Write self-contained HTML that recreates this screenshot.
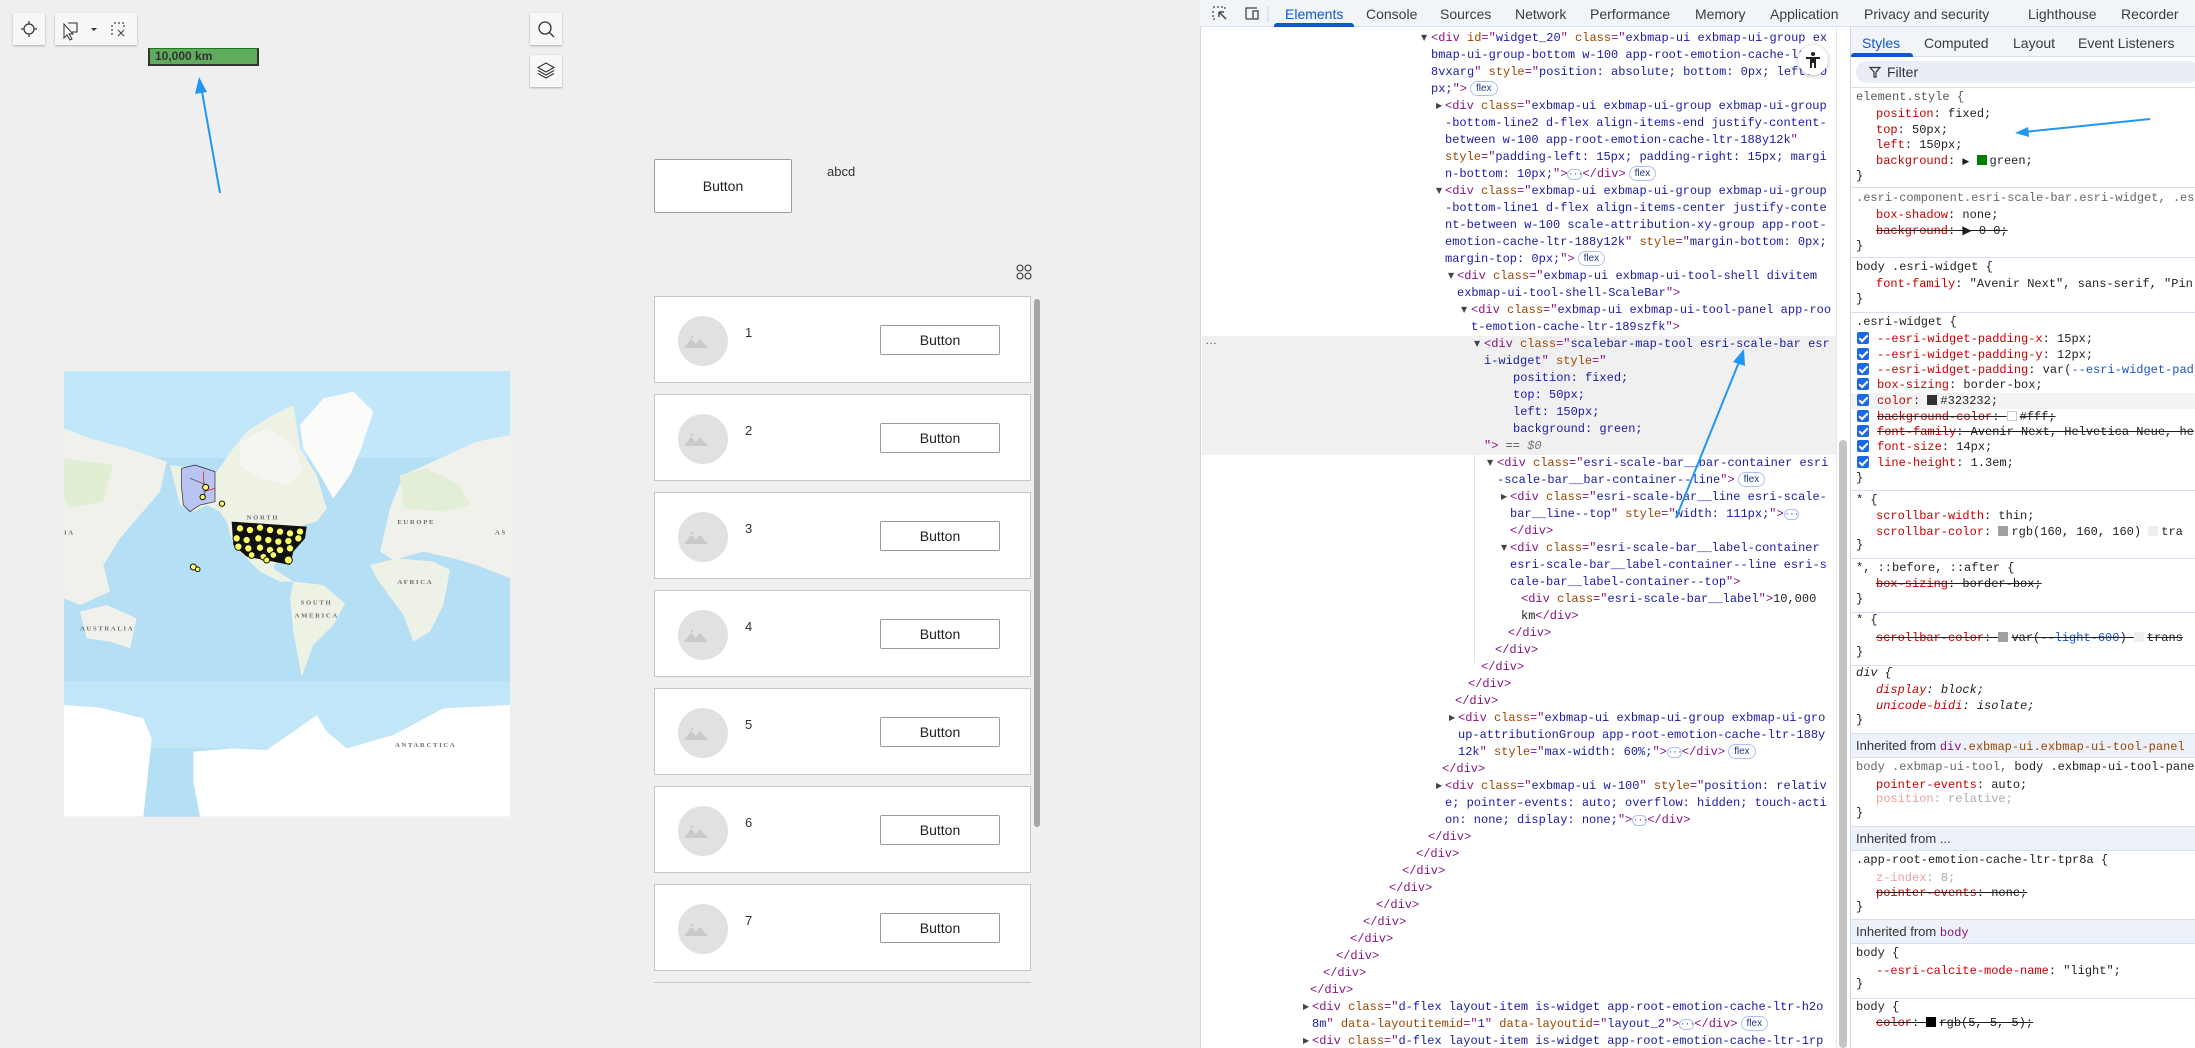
<!DOCTYPE html>
<html><head><meta charset="utf-8">
<style>
*{box-sizing:border-box;margin:0;padding:0}
html,body{width:2195px;height:1048px;overflow:hidden;background:#efefef;font-family:"Liberation Sans",sans-serif;position:relative}
.abs{position:absolute}
.tb{position:absolute;background:#f7f7f7;box-shadow:0 1px 2px rgba(0,0,0,.28);}
.card{position:absolute;left:654px;width:377px;height:87px;background:#fff;border:1px solid #c6c6c6}
.av{position:absolute;left:23px;top:19px;width:50px;height:50px;border-radius:50%;background:#e1e1e1}
.num{position:absolute;left:90px;top:28px;font-size:13px;color:#333}
.btn{position:absolute;left:225px;top:28px;width:120px;height:30px;border:1px solid #9a9a9a;border-radius:2px;background:#fff;font-size:14px;color:#222;text-align:center;line-height:28px}
.dt{position:absolute;font-family:"Liberation Mono",monospace;font-size:12px;white-space:pre;height:17px;line-height:17px;color:#1f1f1f}
.t{color:#881280}.a{color:#994500}.v{color:#1a1aa6}
.tri{position:absolute;font-size:8px;color:#444;font-family:"DejaVu Sans",sans-serif}
.bd{display:inline-block;border:1px solid #a8c0ef;border-radius:9px;font-size:10px;line-height:13px;padding:0 5px;color:#1f3a80;font-family:"Liberation Sans",sans-serif;vertical-align:1px;margin-left:3px}
.el{display:inline-block;border:1px solid #a8c0ef;border-radius:7px;font-size:8px;line-height:9px;width:15px;text-align:center;color:#1a1aa6;vertical-align:1px}
.tab{position:absolute;top:6px;font-size:14px;color:#3c3c3c;white-space:nowrap}
.st{position:absolute;font-family:"Liberation Mono",monospace;font-size:12px;white-space:pre;line-height:16px;height:16px;color:#1f1f1f}
.p{color:#c80000}.s{text-decoration:line-through}
.div{position:absolute;left:1851px;width:344px;height:1px;background:#d6e0f0}
.band{position:absolute;left:1851px;width:344px;height:25px;background:#edf2fa;border-top:1px solid #d6e0f0;border-bottom:1px solid #d6e0f0;font-size:13px;line-height:23px;padding-left:5px;color:#333;white-space:nowrap}
.cb{display:inline-block;width:12px;height:12px;background:#1a6ae8;border-radius:2px;vertical-align:-2px;margin-right:8px;position:relative}
.cb:after{content:"";position:absolute;left:4px;top:1px;width:3px;height:7px;border:solid #fff;border-width:0 2px 2px 0;transform:rotate(45deg)}
.sw{display:inline-block;width:10px;height:10px;vertical-align:-1px;margin-right:3px}
</style></head><body>

<!-- map toolbar -->
<div class="tb" style="left:13px;top:13px;width:32px;height:32px">
<svg width="32" height="32" viewBox="0 0 32 32"><circle cx="16" cy="16" r="5" fill="none" stroke="#333" stroke-width="1.2"/><path d="M16 8v3M16 21v3M8 16h3M21 16h3" stroke="#333" stroke-width="1.2"/></svg></div>
<div class="tb" style="left:55px;top:13px;width:82px;height:32px">
<svg width="82" height="32" viewBox="0 0 82 32"><path d="M13 10h9v9h-5" fill="none" stroke="#333" stroke-width="1.1"/><path d="M9 11l0 14 3-3 3 5 2-1-3-5 4 0z" fill="#fff" stroke="#333" stroke-width="1"/><path d="M36 15h6l-3 3z" fill="#333"/><path d="M59 10h2M63 10h2M67 10h2M57 12v2M57 16v2M57 20v2M69 12v2" stroke="#444" stroke-width="1.2"/><path d="M63 17l6 6M69 17l-6 6" stroke="#444" stroke-width="1.1"/></svg></div>
<div class="tb" style="left:530px;top:13px;width:32px;height:32px">
<svg width="32" height="32" viewBox="0 0 32 32"><circle cx="15" cy="15" r="6" fill="none" stroke="#333" stroke-width="1.3"/><path d="M19.5 19.5l4.5 4.5" stroke="#333" stroke-width="1.3"/></svg></div>
<div class="tb" style="left:530px;top:55px;width:32px;height:32px">
<svg width="32" height="32" viewBox="0 0 32 32"><path d="M16 8l8 4.5-8 4.5-8-4.5z" fill="none" stroke="#333" stroke-width="1.1"/><path d="M8 15.5l8 4.5 8-4.5M8 18.5l8 4.5 8-4.5" fill="none" stroke="#333" stroke-width="1.1"/></svg></div>

<!-- scale bar -->
<div class="abs" style="left:148px;top:48px;width:111px;height:18px;background:#5fac5f;border:2px solid #333;border-top:1px solid #1a7a1a;font-size:12px;font-weight:bold;color:#323232;line-height:15px;padding-left:5px">10,000 km</div>

<!-- map -->
<svg class="abs" style="left:60px;top:365px" width="455" height="458" viewBox="0 0 1365 1374">
<rect x="12" y="18" width="1338" height="1337" fill="#b4dff5"/>
<rect x="12" y="18" width="1338" height="260" fill="#c2e7f9"/>
<rect x="12" y="950" width="1338" height="200" fill="#c0e6f8"/>
<path d="M12 1020 L120 1028 L250 1060 L275 1120 L250 1355 L12 1355Z" fill="#fff"/>
<path d="M400 1160 L520 1150 L620 1155 L700 1100 L770 1050 L800 1100 L860 1150 L1000 1110 L1150 1030 L1350 1020 L1350 1355 L420 1355 L400 1250Z" fill="#fff"/>
<path d="M720 180 L790 100 L880 80 L940 140 L900 260 L870 330 L820 400 L780 330 L730 250Z" fill="#fbfbfa"/>
<path d="M330 300 L365 305 L470 320 L520 250 L560 200 L640 150 L700 120 L720 250 L770 330 L800 430 L770 470 L730 480 L690 520 L650 580 L640 610 L700 650 L660 650 L600 620 L560 580 L520 540 L500 470 L480 440 L440 420 L400 440 L360 420Z" fill="#eef2e4"/>
<path d="M540 230 L620 190 L700 240 L730 320 L680 360 L600 340 L540 300Z" fill="#f5f6f2"/>
<path d="M12 190 L90 220 L200 250 L320 290 L300 380 L240 450 L180 520 L130 600 L150 680 L60 720 L12 700Z" fill="#f1f1ec"/>
<path d="M12 280 L160 300 L130 410 L30 430 L12 400Z" fill="#e2eed4"/>
<path d="M700 650 L790 660 L855 715 L820 780 L760 840 L725 935 L700 800 L690 700Z" fill="#eef2e4"/>
<path d="M930 600 L1010 580 L1120 590 L1170 615 L1150 720 L1110 800 L1060 830 L1030 750 L950 640Z" fill="#eef1e6"/>
<path d="M960 560 L990 430 L1030 330 L1140 280 L1250 230 L1350 210 L1350 640 L1250 600 L1180 580 L1090 560 L1000 585Z" fill="#f1f1ec"/>
<path d="M1020 330 L1100 310 L1200 360 L1230 420 L1150 440 L1030 430Z" fill="#e2eed6"/>
<path d="M60 740 L140 720 L230 760 L210 850 L150 830 L80 820Z" fill="#f1f1ec"/>
<path d="M365 310 L405 300 L465 320 L465 410 L420 420 L390 440 L370 420 L365 370Z" fill="#b9c4f2" stroke="#222" stroke-width="2"/>
<path d="M390 340 L440 360 L430 400" stroke="#666" stroke-width="3" fill="none"/>
<path d="M430 320 L432 360 M430 380 L465 370" stroke="#e00" stroke-width="2"/>
<path d="M515 470 L740 485 L735 520 L700 560 L690 600 L640 590 L560 575 L520 540Z" fill="#111"/>
<g fill="#ffff66" stroke="#111" stroke-width="3">
<circle cx="540" cy="490" r="11"/><circle cx="570" cy="495" r="11"/><circle cx="600" cy="488" r="11"/><circle cx="630" cy="495" r="11"/><circle cx="660" cy="500" r="11"/><circle cx="690" cy="505" r="11"/><circle cx="720" cy="500" r="11"/>
<circle cx="530" cy="520" r="11"/><circle cx="560" cy="525" r="11"/><circle cx="595" cy="520" r="11"/><circle cx="625" cy="525" r="11"/><circle cx="655" cy="530" r="11"/><circle cx="685" cy="528" r="11"/><circle cx="715" cy="520" r="11"/>
<circle cx="535" cy="545" r="11"/><circle cx="565" cy="550" r="11"/><circle cx="600" cy="548" r="11"/><circle cx="630" cy="555" r="11"/><circle cx="660" cy="555" r="11"/><circle cx="690" cy="550" r="11"/>
<circle cx="575" cy="570" r="10"/><circle cx="610" cy="575" r="10"/><circle cx="640" cy="570" r="10"/><circle cx="685" cy="585" r="12"/><circle cx="620" cy="585" r="9"/>
<circle cx="437" cy="367" r="9"/><circle cx="428" cy="396" r="8"/><circle cx="486" cy="416" r="8"/><circle cx="400" cy="606" r="9"/><circle cx="413" cy="613" r="7"/></g>
<g font-family="Liberation Serif,serif" font-size="20" font-weight="bold" fill="#6d6d6d" letter-spacing="5">
<text x="560" y="463">NORTH</text><text x="1012" y="477">EUROPE</text><text x="1012" y="657">AFRICA</text><text x="722" y="719">SOUTH</text><text x="704" y="758">AMERICA</text><text x="60" y="797">AUSTRALIA</text><text x="1005" y="1146">ANTARCTICA</text><text x="12" y="508">IA</text><text x="1305" y="508">AS</text></g>
</svg>

<!-- top button -->
<div class="abs" style="left:654px;top:159px;width:138px;height:54px;background:#fff;border:1px solid #9e9e9e;border-radius:2px;font-size:14px;color:#222;text-align:center;line-height:52px">Button</div>
<div class="abs" style="left:827px;top:164px;font-size:13px;color:#333">abcd</div>
<svg class="abs" style="left:1015px;top:263px" width="18" height="18" viewBox="0 0 18 18"><g fill="none" stroke="#333" stroke-width="1.1"><circle cx="5" cy="5" r="3"/><circle cx="13" cy="5" r="3"/><circle cx="5" cy="13" r="3"/><circle cx="13" cy="13" r="3"/></g></svg>

<!-- cards -->
<div class="card" style="top:296px"><div class="av"></div><div class="num">1</div><div class="btn">Button</div></div>
<div class="card" style="top:394px"><div class="av"></div><div class="num">2</div><div class="btn">Button</div></div>
<div class="card" style="top:492px"><div class="av"></div><div class="num">3</div><div class="btn">Button</div></div>
<div class="card" style="top:590px"><div class="av"></div><div class="num">4</div><div class="btn">Button</div></div>
<div class="card" style="top:688px"><div class="av"></div><div class="num">5</div><div class="btn">Button</div></div>
<div class="card" style="top:786px"><div class="av"></div><div class="num">6</div><div class="btn">Button</div></div>
<div class="card" style="top:884px"><div class="av"></div><div class="num">7</div><div class="btn">Button</div></div>
<div class="abs" style="left:654px;top:982px;width:377px;height:1px;background:#c6c6c6"></div>
<svg class="abs" style="left:654px;top:296px" width="100" height="700">
<g fill="#c9c9c9">
<path d="M30 52l7-9 5 5 4-5 8 9z"/><circle cx="38" cy="41" r="1.2"/>
<path d="M30 150l7-9 5 5 4-5 8 9z"/><circle cx="38" cy="139" r="1.2"/>
<path d="M30 248l7-9 5 5 4-5 8 9z"/><circle cx="38" cy="237" r="1.2"/>
<path d="M30 346l7-9 5 5 4-5 8 9z"/><circle cx="38" cy="335" r="1.2"/>
<path d="M30 444l7-9 5 5 4-5 8 9z"/><circle cx="38" cy="433" r="1.2"/>
<path d="M30 542l7-9 5 5 4-5 8 9z"/><circle cx="38" cy="531" r="1.2"/>
<path d="M30 640l7-9 5 5 4-5 8 9z"/><circle cx="38" cy="629" r="1.2"/></g></svg>
<div class="abs" style="left:1034px;top:299px;width:6px;height:528px;background:#a4a4a4;border-radius:3px"></div>

<!-- arrow left -->
<svg class="abs" style="left:0;top:0" width="1200" height="300"><path d="M220 193 L201 86" stroke="#2196f3" stroke-width="2"/><path d="M199 77 L195 94 L207 92Z" fill="#2196f3"/></svg>

<!-- DEVTOOLS -->
<div class="abs" style="left:1200px;top:0;width:995px;height:1048px;background:#fff;border-left:1px solid #d0d7e2"></div>
<div class="abs" style="left:1200px;top:0;width:995px;height:27px;background:#f1f4f9;border-bottom:1px solid #d6e0f0"></div>
<svg class="abs" style="left:1212px;top:4px" width="60" height="20" viewBox="0 0 60 20"><path d="M1 3h2M5 3h2M9 3h2M1 7v2M1 11v2M1 15h2M13 3v2" stroke="#444" stroke-width="1.3"/><path d="M7 8l7 7M7 8h5M7 8v5" stroke="#444" stroke-width="1.5" fill="none"/><path d="M34 15V4h11M40 15h-6" stroke="#444" stroke-width="1.3" fill="none"/><rect x="41" y="7" width="5" height="8" fill="none" stroke="#444" stroke-width="1.3"/><path d="M56 2v16" stroke="#ccd3df"/></svg>
<div class="tab" style="left:1285px;color:#0b57d0">Elements</div>
<div class="abs" style="left:1274px;top:23px;width:80px;height:4px;background:#0b57d0;border-radius:3px 3px 0 0"></div>
<div class="tab" style="left:1366px">Console</div>
<div class="tab" style="left:1440px">Sources</div>
<div class="tab" style="left:1515px">Network</div>
<div class="tab" style="left:1590px">Performance</div>
<div class="tab" style="left:1695px">Memory</div>
<div class="tab" style="left:1770px">Application</div>
<div class="tab" style="left:1864px">Privacy and security</div>
<div class="tab" style="left:2028px">Lighthouse</div>
<div class="tab" style="left:2121px">Recorder</div>

<!-- elements selected band -->
<div class="abs" style="left:1202px;top:336px;width:634px;height:119px;background:#f0f0f0"></div>
<div class="abs" style="left:1205px;top:333px;font-size:12px;color:#555">…</div>
<div class="abs" style="left:1474px;top:455px;width:1px;height:208px;background:#e4e4e4"></div>
<div class="abs" style="left:1836px;top:27px;width:1px;height:1021px;background:#e8e8e8"></div>
<div class="abs" style="left:1839px;top:440px;width:8px;height:608px;background:#c4c4c4;border-radius:4px"></div>

<div class="tri" style="left:1421px;top:33px">▼</div><div class="dt" style="left:1431px;top:30px"><span class="t">&lt;div</span> <span class="a">id</span><span class="t">="</span><span class="v">widget_20</span><span class="t">"</span> <span class="a">class</span><span class="t">="</span><span class="v">exbmap-ui exbmap-ui-group ex</span></div>
<div class="dt" style="left:1431px;top:47px"><span class="v">bmap-ui-group-bottom w-100 app-root-emotion-cache-ltr-1</span></div>
<div class="dt" style="left:1431px;top:64px"><span class="v">8vxarg</span><span class="t">"</span> <span class="a">style</span><span class="t">="</span><span class="v">position: absolute; bottom: 0px; left: 0</span></div>
<div class="dt" style="left:1431px;top:81px"><span class="v">px;</span><span class="t">"&gt;</span><span class="bd">flex</span></div>
<div class="tri" style="left:1436px;top:101px">▶</div><div class="dt" style="left:1445px;top:98px"><span class="t">&lt;div</span> <span class="a">class</span><span class="t">="</span><span class="v">exbmap-ui exbmap-ui-group exbmap-ui-group</span></div>
<div class="dt" style="left:1445px;top:115px"><span class="v">-bottom-line2 d-flex align-items-end justify-content-</span></div>
<div class="dt" style="left:1445px;top:132px"><span class="v">between w-100 app-root-emotion-cache-ltr-188y12k</span><span class="t">"</span></div>
<div class="dt" style="left:1445px;top:149px"><span class="a">style</span><span class="t">="</span><span class="v">padding-left: 15px; padding-right: 15px; margi</span></div>
<div class="dt" style="left:1445px;top:166px"><span class="v">n-bottom: 10px;</span><span class="t">"&gt;</span><span class="el">···</span><span class="t">&lt;/div&gt;</span><span class="bd">flex</span></div>
<div class="tri" style="left:1436px;top:186px">▼</div><div class="dt" style="left:1445px;top:183px"><span class="t">&lt;div</span> <span class="a">class</span><span class="t">="</span><span class="v">exbmap-ui exbmap-ui-group exbmap-ui-group</span></div>
<div class="dt" style="left:1445px;top:200px"><span class="v">-bottom-line1 d-flex align-items-center justify-conte</span></div>
<div class="dt" style="left:1445px;top:217px"><span class="v">nt-between w-100 scale-attribution-xy-group app-root-</span></div>
<div class="dt" style="left:1445px;top:234px"><span class="v">emotion-cache-ltr-188y12k</span><span class="t">"</span> <span class="a">style</span><span class="t">="</span><span class="v">margin-bottom: 0px;</span></div>
<div class="dt" style="left:1445px;top:251px"><span class="v">margin-top: 0px;</span><span class="t">"&gt;</span><span class="bd">flex</span></div>
<div class="tri" style="left:1448px;top:271px">▼</div><div class="dt" style="left:1457px;top:268px"><span class="t">&lt;div</span> <span class="a">class</span><span class="t">="</span><span class="v">exbmap-ui exbmap-ui-tool-shell divitem</span></div>
<div class="dt" style="left:1457px;top:285px"><span class="v">exbmap-ui-tool-shell-ScaleBar</span><span class="t">"&gt;</span></div>
<div class="tri" style="left:1461px;top:305px">▼</div><div class="dt" style="left:1471px;top:302px"><span class="t">&lt;div</span> <span class="a">class</span><span class="t">="</span><span class="v">exbmap-ui exbmap-ui-tool-panel app-roo</span></div>
<div class="dt" style="left:1471px;top:319px"><span class="v">t-emotion-cache-ltr-189szfk</span><span class="t">"&gt;</span></div>
<div class="tri" style="left:1474px;top:339px">▼</div><div class="dt" style="left:1484px;top:336px"><span class="t">&lt;div</span> <span class="a">class</span><span class="t">="</span><span class="v">scalebar-map-tool esri-scale-bar esr</span></div>
<div class="dt" style="left:1484px;top:353px"><span class="v">i-widget</span><span class="t">"</span> <span class="a">style</span><span class="t">="</span></div>
<div class="dt" style="left:1513px;top:370px"><span class="v">position: fixed;</span></div>
<div class="dt" style="left:1513px;top:387px"><span class="v">top: 50px;</span></div>
<div class="dt" style="left:1513px;top:404px"><span class="v">left: 150px;</span></div>
<div class="dt" style="left:1513px;top:421px"><span class="v">background: green;</span></div>
<div class="dt" style="left:1484px;top:438px"><span class="t">"&gt;</span> <span style="color:#555">==</span> <i style="color:#777">$0</i></div>
<div class="tri" style="left:1487px;top:458px">▼</div><div class="dt" style="left:1497px;top:455px"><span class="t">&lt;div</span> <span class="a">class</span><span class="t">="</span><span class="v">esri-scale-bar__bar-container esri</span></div>
<div class="dt" style="left:1497px;top:472px"><span class="v">-scale-bar__bar-container--line</span><span class="t">"&gt;</span><span class="bd">flex</span></div>
<div class="tri" style="left:1501px;top:492px">▶</div><div class="dt" style="left:1510px;top:489px"><span class="t">&lt;div</span> <span class="a">class</span><span class="t">="</span><span class="v">esri-scale-bar__line esri-scale-</span></div>
<div class="dt" style="left:1510px;top:506px"><span class="v">bar__line--top</span><span class="t">"</span> <span class="a">style</span><span class="t">="</span><span class="v">width: 111px;</span><span class="t">"&gt;</span><span class="el">···</span></div>
<div class="dt" style="left:1510px;top:523px"><span class="t">&lt;/div&gt;</span></div>
<div class="tri" style="left:1501px;top:543px">▼</div><div class="dt" style="left:1510px;top:540px"><span class="t">&lt;div</span> <span class="a">class</span><span class="t">="</span><span class="v">esri-scale-bar__label-container</span></div>
<div class="dt" style="left:1510px;top:557px"><span class="v">esri-scale-bar__label-container--line esri-s</span></div>
<div class="dt" style="left:1510px;top:574px"><span class="v">cale-bar__label-container--top</span><span class="t">"&gt;</span></div>
<div class="dt" style="left:1521px;top:591px"><span class="t">&lt;div</span> <span class="a">class</span><span class="t">="</span><span class="v">esri-scale-bar__label</span><span class="t">"&gt;</span>10,000</div>
<div class="dt" style="left:1521px;top:608px">km<span class="t">&lt;/div&gt;</span></div>
<div class="dt" style="left:1508px;top:625px"><span class="t">&lt;/div&gt;</span></div>
<div class="dt" style="left:1495px;top:642px"><span class="t">&lt;/div&gt;</span></div>
<div class="dt" style="left:1481px;top:659px"><span class="t">&lt;/div&gt;</span></div>
<div class="dt" style="left:1468px;top:676px"><span class="t">&lt;/div&gt;</span></div>
<div class="dt" style="left:1455px;top:693px"><span class="t">&lt;/div&gt;</span></div>
<div class="tri" style="left:1449px;top:713px">▶</div><div class="dt" style="left:1458px;top:710px"><span class="t">&lt;div</span> <span class="a">class</span><span class="t">="</span><span class="v">exbmap-ui exbmap-ui-group exbmap-ui-gro</span></div>
<div class="dt" style="left:1458px;top:727px"><span class="v">up-attributionGroup app-root-emotion-cache-ltr-188y</span></div>
<div class="dt" style="left:1458px;top:744px"><span class="v">12k</span><span class="t">"</span> <span class="a">style</span><span class="t">="</span><span class="v">max-width: 60%;</span><span class="t">"&gt;</span><span class="el">···</span><span class="t">&lt;/div&gt;</span><span class="bd">flex</span></div>
<div class="dt" style="left:1442px;top:761px"><span class="t">&lt;/div&gt;</span></div>
<div class="tri" style="left:1436px;top:781px">▶</div><div class="dt" style="left:1445px;top:778px"><span class="t">&lt;div</span> <span class="a">class</span><span class="t">="</span><span class="v">exbmap-ui w-100</span><span class="t">"</span> <span class="a">style</span><span class="t">="</span><span class="v">position: relativ</span></div>
<div class="dt" style="left:1445px;top:795px"><span class="v">e; pointer-events: auto; overflow: hidden; touch-acti</span></div>
<div class="dt" style="left:1445px;top:812px"><span class="v">on: none; display: none;</span><span class="t">"&gt;</span><span class="el">···</span><span class="t">&lt;/div&gt;</span></div>
<div class="dt" style="left:1428px;top:829px"><span class="t">&lt;/div&gt;</span></div>
<div class="dt" style="left:1416px;top:846px"><span class="t">&lt;/div&gt;</span></div>
<div class="dt" style="left:1402px;top:863px"><span class="t">&lt;/div&gt;</span></div>
<div class="dt" style="left:1389px;top:880px"><span class="t">&lt;/div&gt;</span></div>
<div class="dt" style="left:1376px;top:897px"><span class="t">&lt;/div&gt;</span></div>
<div class="dt" style="left:1363px;top:914px"><span class="t">&lt;/div&gt;</span></div>
<div class="dt" style="left:1350px;top:931px"><span class="t">&lt;/div&gt;</span></div>
<div class="dt" style="left:1336px;top:948px"><span class="t">&lt;/div&gt;</span></div>
<div class="dt" style="left:1323px;top:965px"><span class="t">&lt;/div&gt;</span></div>
<div class="dt" style="left:1310px;top:982px"><span class="t">&lt;/div&gt;</span></div>
<div class="tri" style="left:1303px;top:1002px">▶</div><div class="dt" style="left:1312px;top:999px"><span class="t">&lt;div</span> <span class="a">class</span><span class="t">="</span><span class="v">d-flex layout-item is-widget app-root-emotion-cache-ltr-h2o</span></div>
<div class="dt" style="left:1312px;top:1016px"><span class="v">8m</span><span class="t">"</span> <span class="a">data-layoutitemid</span><span class="t">="</span><span class="v">1</span><span class="t">"</span> <span class="a">data-layoutid</span><span class="t">="</span><span class="v">layout_2</span><span class="t">"&gt;</span><span class="el">···</span><span class="t">&lt;/div&gt;</span><span class="bd">flex</span></div>
<div class="tri" style="left:1303px;top:1036px">▶</div><div class="dt" style="left:1312px;top:1033px"><span class="t">&lt;div</span> <span class="a">class</span><span class="t">="</span><span class="v">d-flex layout-item is-widget app-root-emotion-cache-ltr-1rp</span></div>

<!-- accessibility button -->
<div class="abs" style="left:1798px;top:45px;width:30px;height:30px;border-radius:50%;background:#fff;box-shadow:0 1px 4px rgba(0,0,0,.3)"></div>
<svg class="abs" style="left:1803px;top:50px" width="20" height="20" viewBox="0 0 20 20"><circle cx="10" cy="4" r="2" fill="#222"/><path d="M3 7h14v2h-4v9h-2v-5h-2v5H7V9H3z" fill="#222"/></svg>

<!-- arrow elements -->
<svg class="abs" style="left:1600px;top:330px" width="200" height="200"><path d="M76 188 L141 27" stroke="#2196f3" stroke-width="2"/><path d="M144 19 L133 32 L145 36Z" fill="#2196f3"/></svg>

<!-- STYLES PANE -->
<div class="abs" style="left:1850px;top:27px;width:1px;height:1021px;background:#cfd6e2"></div>
<div class="abs" style="left:1851px;top:27px;width:344px;height:30px;background:#f1f4f9;border-bottom:1px solid #d6e0f0"></div>
<div class="tab" style="left:1862px;top:35px;color:#0b57d0">Styles</div>
<div class="abs" style="left:1851px;top:53px;width:62px;height:4px;background:#0b57d0;border-radius:3px 3px 0 0"></div>
<div class="tab" style="left:1924px;top:35px">Computed</div>
<div class="tab" style="left:2013px;top:35px">Layout</div>
<div class="tab" style="left:2078px;top:35px">Event Listeners</div>
<div class="abs" style="left:1856px;top:61px;width:345px;height:22px;background:#e9eef6;border-radius:11px"></div>
<svg class="abs" style="left:1869px;top:66px" width="12" height="12" viewBox="0 0 12 12"><path d="M1 1.5h10L7 6v5H5V6z" fill="none" stroke="#333" stroke-width="1.2"/></svg>
<div class="abs" style="left:1887px;top:64px;font-size:14px;color:#333">Filter</div>
<div class="div" style="top:87px"></div>

<div class="st" style="left:1856px;top:89px;color:#555">element.style {</div>
<div class="st" style="left:1876px;top:106px"><span class="p">position</span>: fixed;</div>
<div class="st" style="left:1876px;top:122px"><span class="p">top</span>: 50px;</div>
<div class="st" style="left:1876px;top:137px"><span class="p">left</span>: 150px;</div>
<div class="st" style="left:1876px;top:153px"><span class="p">background</span>: <span style="font-size:9px">▶</span> <span class="sw" style="background:#008000"></span>green;</div>
<div class="st" style="left:1856px;top:168px">}</div>
<div class="div" style="top:187px"></div>
<div class="st" style="left:1856px;top:190px;color:#666">.esri-component.esri-scale-bar.esri-widget, .es</div>
<div class="st" style="left:1876px;top:207px"><span class="p">box-shadow</span>: none;</div>
<div class="st s" style="left:1876px;top:223px"><span class="p">background</span>: ▶ 0 0;</div>
<div class="st" style="left:1856px;top:238px">}</div>
<div class="div" style="top:257px"></div>
<div class="st" style="left:1856px;top:259px">body .esri-widget {</div>
<div class="st" style="left:1876px;top:276px"><span class="p">font-family</span>: "Avenir Next", sans-serif, "Pin</div>
<div class="st" style="left:1856px;top:291px">}</div>
<div class="div" style="top:312px"></div>
<div class="st" style="left:1856px;top:314px">.esri-widget {</div>
<div class="abs" style="left:1851px;top:393px;width:344px;height:16px;background:#f3f3f3"></div>
<div class="st" style="left:1857px;top:331px"><span class="cb"></span><span class="p">--esri-widget-padding-x</span>: 15px;</div>
<div class="st" style="left:1857px;top:347px"><span class="cb"></span><span class="p">--esri-widget-padding-y</span>: 12px;</div>
<div class="st" style="left:1857px;top:362px"><span class="cb"></span><span class="p">--esri-widget-padding</span>: var(<span style="color:#1a55c8">--esri-widget-pad</span></div>
<div class="st" style="left:1857px;top:377px"><span class="cb"></span><span class="p">box-sizing</span>: border-box;</div>
<div class="st" style="left:1857px;top:393px"><span class="cb"></span><span class="p">color</span>: <span class="sw" style="background:#323232"></span>#323232;</div>
<div class="st" style="left:1857px;top:409px"><span class="cb"></span><span class="s"><span class="p">background-color</span>: <span class="sw" style="background:#fff;border:1px solid #ccc"></span>#fff;</span></div>
<div class="st" style="left:1857px;top:424px"><span class="cb"></span><span class="s"><span class="p">font-family</span>: Avenir Next, Helvetica Neue, he</span></div>
<div class="st" style="left:1857px;top:439px"><span class="cb"></span><span class="p">font-size</span>: 14px;</div>
<div class="st" style="left:1857px;top:455px"><span class="cb"></span><span class="p">line-height</span>: 1.3em;</div>
<div class="st" style="left:1856px;top:470px">}</div>
<div class="div" style="top:490px"></div>
<div class="st" style="left:1856px;top:492px">* {</div>
<div class="st" style="left:1876px;top:508px"><span class="p">scrollbar-width</span>: thin;</div>
<div class="st" style="left:1876px;top:524px"><span class="p">scrollbar-color</span>: <span class="sw" style="background:#a0a0a0"></span>rgb(160, 160, 160) <span class="sw" style="background:#eee"></span>tra</div>
<div class="st" style="left:1856px;top:537px">}</div>
<div class="div" style="top:558px"></div>
<div class="st" style="left:1856px;top:560px">*, ::before, ::after {</div>
<div class="st s" style="left:1876px;top:576px"><span class="p">box-sizing</span>: border-box;</div>
<div class="st" style="left:1856px;top:591px">}</div>
<div class="div" style="top:612px"></div>
<div class="st" style="left:1856px;top:612px">* {</div>
<div class="st s" style="left:1876px;top:630px"><span class="p">scrollbar-color</span>: <span class="sw" style="background:#a0a0a0"></span>var(<span style="color:#1a55c8">--light-600</span>) <span class="sw" style="background:#eee"></span>trans</div>
<div class="st" style="left:1856px;top:644px">}</div>
<div class="div" style="top:665px"></div>
<div class="st" style="left:1856px;top:665px;font-style:italic">div {</div>
<div class="st" style="left:1876px;top:682px;font-style:italic"><span class="p">display</span>: block;</div>
<div class="st" style="left:1876px;top:698px;font-style:italic"><span class="p">unicode-bidi</span>: isolate;</div>
<div class="st" style="left:1856px;top:712px">}</div>
<div class="band" style="top:733px">Inherited from <span style="font-family:'Liberation Mono',monospace;font-size:12px"><span style="color:#881280">div</span><span style="color:#994500">.exbmap-ui.exbmap-ui-tool-panel</span></span></div>
<div class="st" style="left:1856px;top:759px"><span style="color:#666">body .exbmap-ui-tool,</span> body .exbmap-ui-tool-pane</div>
<div class="st" style="left:1876px;top:777px"><span class="p">pointer-events</span>: auto;</div>
<div class="st" style="left:1876px;top:791px;color:#aaa"><span style="color:#e8a0a0">position</span>: relative;</div>
<div class="st" style="left:1856px;top:805px">}</div>
<div class="band" style="top:826px">Inherited from ...</div>
<div class="st" style="left:1856px;top:852px">.app-root-emotion-cache-ltr-tpr8a {</div>
<div class="st" style="left:1876px;top:870px;color:#aaa"><span style="color:#e8a0a0">z-index</span>: 8;</div>
<div class="st s" style="left:1876px;top:885px"><span class="p">pointer-events</span>: none;</div>
<div class="st" style="left:1856px;top:899px">}</div>
<div class="band" style="top:919px">Inherited from <span style="font-family:'Liberation Mono',monospace;font-size:12px;color:#881280">body</span></div>
<div class="st" style="left:1856px;top:945px">body {</div>
<div class="st" style="left:1876px;top:963px"><span class="p">--esri-calcite-mode-name</span>: "light";</div>
<div class="st" style="left:1856px;top:976px">}</div>
<div class="div" style="top:998px"></div>
<div class="st" style="left:1856px;top:999px">body {</div>
<div class="st s" style="left:1876px;top:1015px"><span class="p">color</span>: <span class="sw" style="background:#050505"></span>rgb(5, 5, 5);</div>

<!-- arrow styles -->
<svg class="abs" style="left:2000px;top:110px" width="160" height="40"><path d="M150 9 L24 22" stroke="#2196f3" stroke-width="2"/><path d="M15 23 L28 17 L29 27Z" fill="#2196f3"/></svg>

</body></html>
